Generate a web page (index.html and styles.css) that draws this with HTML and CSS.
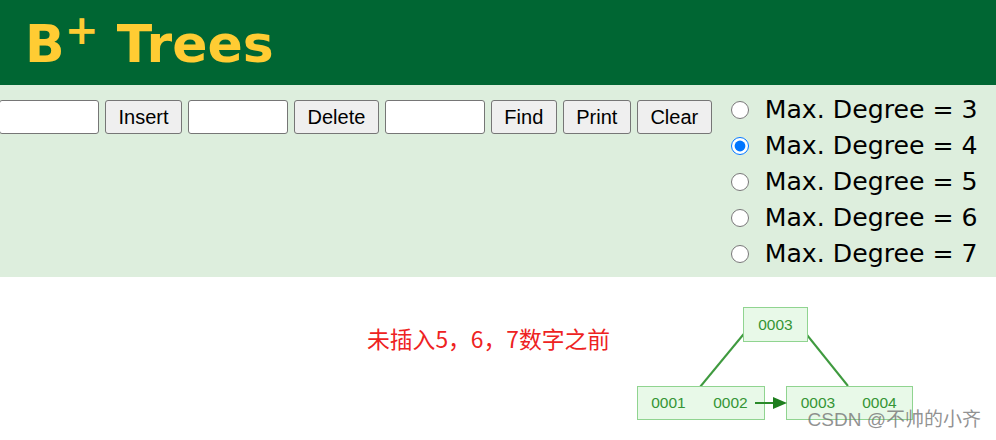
FILE: index.html
```html
<!DOCTYPE html>
<html lang="zh">

<head>
    <meta charset="UTF-8">
    <meta name="viewport" content="width=device-width, initial-scale=1.0">
    <title>B+ Trees</title>
    <link rel="stylesheet" href="styles.css">
</head>

<body>
    <header class="title-bar">
        <h1>B<sup>+</sup> Trees</h1>
    </header>

    <section class="control-panel">
        <div class="controls">
            <input type="text" class="field">
            <button>Insert</button>
            <input type="text" class="field">
            <button>Delete</button>
            <input type="text" class="field">
            <button>Find</button>
            <button>Print</button>
            <button>Clear</button>
        </div>
        <div class="degree-list">
            <label class="degree"><input type="radio" name="degree">Max. Degree = 3</label>
            <label class="degree"><input type="radio" name="degree" checked>Max. Degree = 4</label>
            <label class="degree"><input type="radio" name="degree">Max. Degree = 5</label>
            <label class="degree"><input type="radio" name="degree">Max. Degree = 6</label>
            <label class="degree"><input type="radio" name="degree">Max. Degree = 7</label>
        </div>
    </section>

    <main class="canvas">
        <p class="note">未插入5，6，7数字之前</p>
        <!-- arbol antes de insertar -->
        <svg class="tree" width="290" height="125" viewBox="0 0 290 125">
            <line class="edge" x1="122" y1="24" x2="70" y2="87"></line>
            <line class="edge" x1="169" y1="25" x2="218" y2="86"></line>
            <rect class="node" x="113.5" y="7.5" width="64" height="34"></rect>
            <rect class="node" x="7.5" y="86.5" width="127" height="33"></rect>
            <rect class="node" x="156.5" y="86.5" width="126" height="33"></rect>
            <text class="key" x="145.5" y="30">0003</text>
            <text class="key" x="38.5" y="108">0001</text>
            <text class="key" x="100.5" y="108">0002</text>
            <text class="key" x="188" y="108">0003</text>
            <text class="key" x="249.5" y="108">0004</text>
            <line class="link" x1="125" y1="103" x2="144" y2="103"></line>
            <polygon class="link-head" points="143,97 157,103 143,109"></polygon>
        </svg>
        <span class="watermark">CSDN @不帅的小齐</span>
    </main>
</body>

</html>
```

FILE: styles.css
```css
body {
    margin: 0;
    font-family: 'Liberation Sans', Arial, sans-serif;
    background-color: #ffffff;
    color: #000000;
}

.title-bar {
    background-color: #006633;
    padding: 18px 0 15px 25px;
}

.title-bar h1 {
    margin: 0;
    font-family: 'DejaVu Sans', Verdana, sans-serif;
    font-size: 52px;
    font-weight: 700;
    line-height: 52px;
    color: #ffcc33;
}

.title-bar sup {
    font-size: 0.78em;
    line-height: 0;
}

.control-panel {
    display: flex;
    align-items: flex-start;
    background-color: #ddeedd;
    padding: 7px 0 5px 0;
}

.controls {
    display: flex;
    gap: 6px;
    margin-top: 8px;
    margin-left: -1px;
}

.field {
    width: 100px;
    height: 34px;
    box-sizing: border-box;
    border: 1px solid #767676;
    border-radius: 3px;
    background: #ffffff;
    font-size: 20px;
    padding: 0 4px;
}

button {
    height: 34px;
    padding: 0 12.5px;
    font-family: 'Liberation Sans', Arial, sans-serif;
    font-size: 20px;
    color: #000000;
    background-color: #efefef;
    border: 1px solid #767676;
    border-radius: 3px;
}

.degree-list {
    display: flex;
    flex-direction: column;
    margin-left: 19px;
}

.degree {
    display: flex;
    align-items: center;
    gap: 16px;
    height: 36px;
    font-family: 'DejaVu Sans', Verdana, sans-serif;
    font-size: 25.2px;
    line-height: 36px;
}

.degree input {
    width: 18px;
    height: 18px;
    margin: 0;
}

.canvas {
    position: relative;
    display: grid;
    grid-template-columns: 630px 290px;
    align-items: start;
    padding-top: 23px;
    height: 140px;
}

.note {
    margin: 24px 0 0 0;
    padding-left: 367px;
    font-family: 'Noto Sans CJK SC', sans-serif;
    font-size: 22.8px;
    line-height: 30px;
    color: #ee2222;
    white-space: nowrap;
}

.tree .node {
    fill: #e8f9e8;
    stroke: #90d490;
    stroke-width: 1;
}

.tree .edge {
    stroke: #3f9a3f;
    stroke-width: 2;
}

.tree .key {
    font-family: 'Liberation Sans', Arial, sans-serif;
    font-size: 15.5px;
    fill: #359535;
    text-anchor: middle;
}

.tree .link {
    stroke: #2a8a2a;
    stroke-width: 2;
}

.tree .link-head {
    fill: #1e7e1e;
}

.watermark {
    position: absolute;
    right: 15px;
    top: 132px;
    font-family: 'Liberation Sans', 'Noto Sans CJK SC', sans-serif;
    font-size: 19px;
    line-height: 22px;
    color: rgba(110, 110, 110, 0.75);
}
```
